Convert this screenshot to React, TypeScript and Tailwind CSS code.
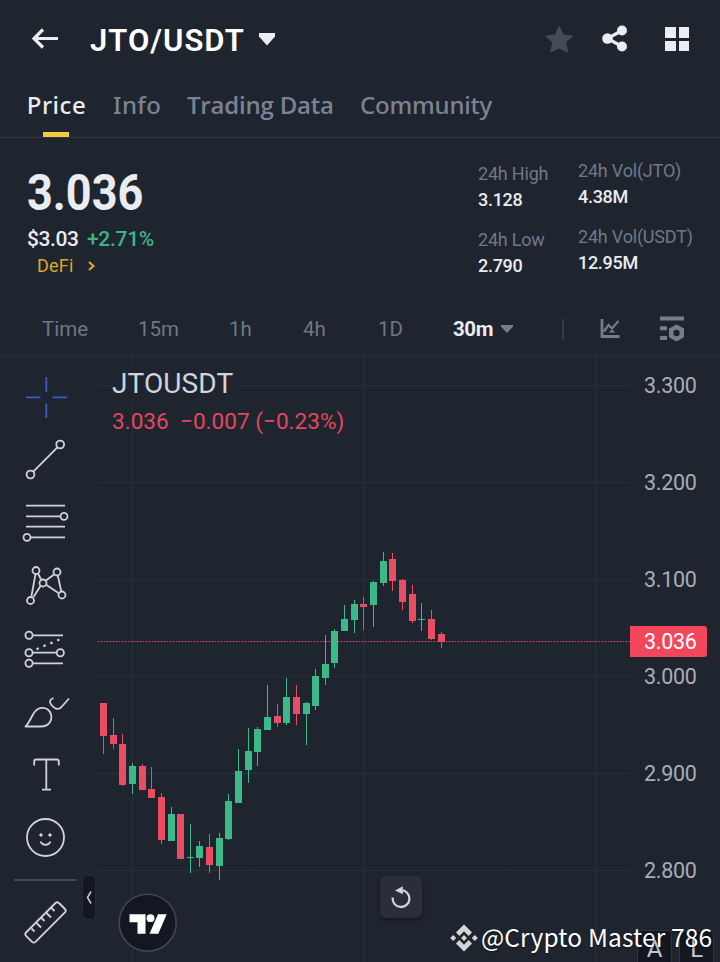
import React from "react";

type Candle = [x: number, open: number, close: number, high: number, low: number, up: 0 | 1];

// x centre, body top, body bottom, wick top, wick bottom, direction
const candles: Candle[] = [
  [103.5, 703, 736, 703, 754, 0],
  [113.5, 735, 744, 718, 749, 0],
  [122.5, 744, 785, 734, 786, 0],
  [132.5, 766, 784, 763, 794, 1],
  [142.5, 766, 790, 764, 790, 0],
  [151.5, 789, 798, 767, 798, 0],
  [161.5, 797, 840, 793, 844, 0],
  [171.5, 814, 841, 807, 841, 1],
  [180.5, 814, 859, 814, 859, 0],
  [190.5, 857, 858, 824, 873, 1],
  [199.5, 846, 858, 841, 867, 1],
  [209.5, 847, 865, 834, 873, 0],
  [219.5, 838, 866, 833, 880, 1],
  [228.5, 801, 839, 794, 840, 1],
  [238.5, 771, 803, 749, 803, 1],
  [248.5, 751, 770, 728, 783, 1],
  [257.5, 729, 752, 727, 766, 1],
  [267.5, 717, 730, 685, 730, 1],
  [277.5, 716, 723, 704, 727, 0],
  [286.5, 697, 723, 678, 725, 1],
  [296.5, 697, 714, 685, 725, 0],
  [306.5, 703, 714, 702, 745, 1],
  [315.5, 676, 706, 669, 710, 1],
  [325.5, 664, 678, 635, 685, 1],
  [334.5, 631, 663, 629, 668, 1],
  [344.5, 619, 631, 605, 631, 1],
  [354.5, 604, 620, 600, 633, 1],
  [363.5, 604, 607, 597, 630, 0],
  [373.5, 582, 605, 581, 627, 1],
  [383.5, 561, 583, 552, 586, 1],
  [392.5, 559, 581, 553, 591, 0],
  [402.5, 580, 602, 579, 610, 0],
  [412.5, 594, 621, 585, 623, 0],
  [421.5, 619, 620, 603, 631, 1],
  [431.5, 619, 639, 610, 640, 0],
  [441.5, 634, 642, 632, 648, 0],
];

const gridY = [385.5, 482.5, 579.5, 676.5, 773.5, 870.5];
const gridX = [132.5, 363.5, 595.5];
const axisLabels = ["3.300", "3.200", "3.100", "3.000", "2.900", "2.800"];

function Header() {
  return (
    <header className="flex h-[78px] items-center pl-[31px] pr-[31px]">
      <svg className="h-[22px] w-[28px]" viewBox="31 28 28 22" fill="none" stroke="#eaecef" strokeWidth="3.2">
        <path d="M58 38.5H34M43 29.5l-9 9 9 9" />
      </svg>
      <h1 className="ml-[31px] w-[154px] whitespace-nowrap pt-[3px] font-['Roboto',sans-serif] text-[31px] font-semibold leading-[75px] tracking-[1px] text-white">
        JTO/USDT
      </h1>
      <svg className="ml-[14px] h-[14px] w-[18px]" viewBox="258 32 18 14" fill="#eaecef">
        <path d="M259 33h16v3.5l-8 9-8-9z" />
      </svg>
      <svg className="ml-auto h-[28px] w-[28px]" viewBox="545 25 28 28" fill="#434c5a" stroke="#434c5a" strokeWidth="1.5" strokeLinejoin="round">
        <path d="M559.2 27l3.8 8.3 9 .9-6.7 6 2 9.5-8.1-4.2-8.1 4.2 2-9.5-6.7-6 9-.9z" />
      </svg>
      <svg className="ml-[28px] h-[28px] w-[28px]" viewBox="601 25 28 28" fill="#eaecef" stroke="#eaecef">
        <path d="M622 30.5l-14.500 8 14.500 8" fill="none" strokeWidth="3.200" />
        <circle cx="622" cy="30.500" r="5" stroke="none" />
        <circle cx="607.500" cy="38.500" r="5.300" stroke="none" />
        <circle cx="622" cy="46.500" r="5" stroke="none" />
      </svg>
      <div className="ml-[36px] grid grid-cols-2 gap-[3px]">
        <i className="size-[10.5px] bg-[#eaecef]" />
        <i className="size-[10.5px] bg-[#eaecef]" />
        <i className="size-[10.5px] bg-[#eaecef]" />
        <i className="size-[10.5px] bg-[#eaecef]" />
      </div>
    </header>
  );
}

function Tabs() {
  return (
    <nav className="flex h-[60px] whitespace-nowrap border-b border-[#2f3641] pl-[27px] text-[24px] font-medium leading-[54px] text-[#7b8392]">
      <div className="w-[86px]">
        <div className="flex w-[58px] flex-col items-center font-['Noto_Sans',sans-serif] tracking-[0.5px] text-[#eaecef]">
          <span className="pl-px">Price</span>
          <i className="h-[5px] w-[26px] bg-[#f0cd3f]" />
        </div>
      </div>
      <span className="w-[74px] font-['Noto_Sans',sans-serif] tracking-[0.4px]">Info</span>
      <span className="w-[173px] font-['Open_Sans',sans-serif] font-semibold tracking-[-0.2px]">Trading Data</span>
      <span className="font-['Noto_Sans',sans-serif] tracking-[-0.2px]">Community</span>
    </nav>
  );
}

function Stat({ label, value }: { label: string; value: string }) {
  return (
    <div className="mb-[14px] whitespace-nowrap font-['Roboto',sans-serif] text-[18px]">
      <div className="pt-px leading-[24px] tracking-[-0.2px] text-[#707887]">{label}</div>
      <div className="mt-px font-medium leading-[26px] tracking-[-0.3px] text-[#eaecef]">{value}</div>
    </div>
  );
}

function Summary() {
  return (
    <section className="flex h-[166px] pl-[27px] font-['Roboto',sans-serif]">
      <div className="w-[451px] pt-[28px]">
        <div className="w-fit origin-left scale-x-[.9] text-[50px] font-bold leading-[54px] text-[#eaecef]">3.036</div>
        <div className="mt-[5px] flex text-[21px] font-medium leading-[28px] tracking-[-0.4px]">
          <span className="w-[60px] text-[#eaecef]">$3.03</span>
          <span className="tracking-[-0.3px] text-[#3bb583]">+2.71%</span>
        </div>
        <div className="mt-px flex items-center pl-[10px] text-[18px] leading-[24px] text-[#d9a927]">
          <span className="w-[51px] tracking-[0.2px]">DeFi</span>
          <svg className="h-[10px] w-[7px]" viewBox="0 0 7 10" fill="none" stroke="#e0ac22" strokeWidth="2">
            <path d="M1 1l4.500 4L1 9" />
          </svg>
        </div>
      </div>
      <div className="w-[100px] pt-[23px]">
        <Stat label="24h High" value="3.128" />
        <Stat label="24h Low" value="2.790" />
      </div>
      <div className="pt-[20px]">
        <Stat label="24h Vol(JTO)" value="4.38M" />
        <Stat label="24h Vol(USDT)" value="12.95M" />
      </div>
    </section>
  );
}

function Intervals() {
  return (
    <section className="flex h-[50px] items-center whitespace-nowrap pl-[42px] font-['Roboto',sans-serif] text-[20.5px] leading-[50px] text-[#6f7786]">
      <span className="w-[96px]">Time</span>
      <span className="w-[91px]">15m</span>
      <span className="w-[74px]">1h</span>
      <span className="w-[75px]">4h</span>
      <span className="w-[75px]">1D</span>
      <span className="w-[48px] font-bold tracking-[-0.4px] text-[#eaecef]">30m</span>
      <svg className="h-[8px] w-[12px]" viewBox="0 0 12 8" fill="#767e8e">
        <path d="M0 0h12v1.500L6 8 0 1.500z" />
      </svg>
      <i className="ml-[49px] h-[21px] w-[2px] bg-[#343b47]" />
      <svg className="ml-[36px] h-[20px] w-[20px]" viewBox="600 318 20 20" fill="none" stroke="#767e8e" strokeWidth="2.800">
        <path d="M602 318v17.500h17.500" />
        <path d="M604 330.500l4.500-6.500 3.500 3.500 6.500-7.500" strokeWidth="2.200" />
        <path d="M608.500 331.500l3.500-3 3.500 3z" fill="#767e8e" stroke="none" />
      </svg>
      <svg className="ml-[40px] h-[26px] w-[25px]" viewBox="660 315 25 26" fill="#767e8e">
        <path d="M660 315.500h24v4h-24zM660 325.200h7v4h-7zM660 335h7v4h-7z" />
        <path fillRule="evenodd" d="M676.500 323.500l7.500 4.100v8.600l-7.500 4.300-7.500-4.300v-8.600zM676.500 328.800a3.200 3.200 0 100 6.400 3.200 3.200 0 000-6.400z" />
      </svg>
    </section>
  );
}

const toolIcons: React.ReactNode[] = [
  <path key="cross" stroke="#3a5ccc" d="M46.300 377v15M46.300 403.500v14.500M26 397.300h14.500M52.500 397.300H67" />,
  <g key="trend">
    <circle cx="60.200" cy="444.500" r="3.900" />
    <circle cx="30.500" cy="474.500" r="3.900" />
    <path d="M57.400 447.300L33.300 471.700" />
  </g>,
  <g key="fib">
    <path d="M26 505.700h39M26 516.300h34M26 526.700h39M31 537.300h34" />
    <circle cx="64" cy="516.300" r="3.500" />
    <circle cx="27" cy="537.300" r="3.500" />
  </g>,
  <g key="pattern">
    <path d="M31.500 596L35.500 574M38 573.500l3 6M46 580.500l8-6M57.800 575.500l3.500 16M46.500 585l12 8M40.500 586L33.500 597" />
    <circle cx="36" cy="570.500" r="3.500" />
    <circle cx="57" cy="572" r="3.500" />
    <circle cx="43" cy="583" r="3.500" />
    <circle cx="62" cy="595" r="3.500" />
    <circle cx="30.500" cy="600.500" r="3.500" />
  </g>,
  <g key="forecast">
    <path d="M32.500 635.300H63M32.500 652.700H56.500M32.500 663.300H63" />
    <path d="M36.500 649.300L60.500 639" strokeDasharray="2.500 5" strokeWidth="2.200" />
    <circle cx="29" cy="635.300" r="3.600" />
    <circle cx="29" cy="652.700" r="3.600" />
    <circle cx="60.300" cy="652.700" r="3.600" />
    <circle cx="29" cy="663.300" r="3.600" />
  </g>,
  <g key="brush">
    <path d="M25.500 726.500c4.500-4.500 6-11 9.500-15 4.500-5.500 12-4.500 15 .5 3.500 6.500 0 14.500-9.500 14.500z" />
    <path d="M53.500 698c-4 1.500-4.500 4-2 7 3 3.500 6 5.500 9.500 2.500l8-9" />
  </g>,
  <path key="text" d="M34.200 765.500v-4c0-1.500.5-2 2-2h20.600c1.500 0 2 .5 2 2v4M46.300 759.500v30M42 789.700h9" />,
  <g key="smile">
    <circle cx="45.500" cy="837.500" r="18.500" />
    <path d="M40.500 841.500c2 4.500 8 4.500 10 0" />
    <circle cx="41" cy="835" r="1.300" fill="#cfd3dc" strokeWidth="0.800" />
    <circle cx="50" cy="835" r="1.300" fill="#cfd3dc" strokeWidth="0.800" />
  </g>,
];

const toolBoxes = ["15 366 62 63", "15 429 62 63", "15 492 62 63", "15 555 62 63", "15 618 62 63", "15 681 62 63", "15 744 62 63", "15 807 62 63"];

function Toolbar() {
  return (
    <aside className="flex w-[97px] shrink-0 flex-col pt-[12px]">
      {toolIcons.map((icon, i) => (
        <svg key={i} className="ml-[15px] h-[63px] w-[62px] shrink-0" viewBox={toolBoxes[i]} fill="none" stroke="#cfd3dc" strokeWidth="1.800" strokeLinejoin="round">
          {icon}
        </svg>
      ))}
      <div className="flex h-[92px]">
        <div className="w-[77px] pl-[14px] pt-[9px]">
          <div className="h-[2px] w-[63px] bg-[#434751]" />
          <svg className="ml-[10px] mt-[20px] h-[44px] w-[44px]" viewBox="24 901 44 44" fill="none" stroke="#cfd3dc" strokeWidth="1.800" strokeLinejoin="round">
            <path d="M26 932.500L55.500 903q1.700-1.500 3.400 0l6 6q1.700 1.700 0 3.400L35.500 941.800q-1.700 1.700-3.400 0l-6-6q-1.700-1.700-.1-3.300z" />
            <path d="M31.500 928.500l3 3M36.500 923l4.500 4.500M41.500 918l3 3M46.500 913l4.500 4.500M51.500 908l3 3" />
          </svg>
        </div>
        <div className="ml-[5px] mt-[5px] flex h-[45px] w-[14px] items-center justify-center rounded-[6px] border border-[#262b36] bg-[#131722]">
          <svg className="h-[13px] w-[6px]" viewBox="0 0 6 13" fill="none" stroke="#c3c7d0" strokeWidth="1.600">
            <path d="M5 .5L1.500 6.500 5 12.500" />
          </svg>
        </div>
      </div>
    </aside>
  );
}

function Chart() {
  return (
    <div className="relative h-full w-[533px] shrink-0">
      <svg className="block h-[608px] w-[533px]" viewBox="97 354 533 608">
        <g stroke="#29303a" strokeWidth="1">
          {gridY.map((y) => (
            <path key={y} d={`M97 ${y}H630`} />
          ))}
          {gridX.map((x) => (
            <path key={x} d={`M${x} 354V962`} />
          ))}
        </g>
        <path d="M98 641.500H630" stroke="#f0405c" strokeOpacity="0.25" strokeWidth="1" />
        <path d="M98 641.500H630" stroke="#e84c66" strokeWidth="1" strokeDasharray="1 2" shapeRendering="crispEdges" />
        {candles.map(([x, top, bottom, high, low, up]) => (
          <g key={x} fill={up ? "#3bb988" : "#ea4c64"}>
            <rect x={x - 0.5} y={high} width="1" height={low - high} />
            <rect x={x - 3.5} y={top} width="7" height={bottom - top} />
          </g>
        ))}
      </svg>
      <div className="absolute left-[15px] top-[13px] whitespace-nowrap font-['Roboto',sans-serif]">
        <div className="w-fit bg-[#1f252f] pr-[6px] text-[28px] leading-[34px] tracking-[0.1px] text-[#d1d4dc]">JTOUSDT</div>
        <div className="mt-[6px] flex text-[22.6px] leading-[30px] text-[#e0485f]">
          <span className="w-[68px]">3.036</span>
          <span>−0.007 (−0.23%)</span>
        </div>
      </div>
      <svg className="absolute left-[21px] top-[539px] h-[60px] w-[60px]" viewBox="118 893 60 60">
        <circle cx="147.700" cy="922.700" r="28.500" fill="#131722" stroke="#43464f" strokeWidth="1.600" />
        <path fill="#fff" d="M129.500 914.300h16v19.500h-8V922.300h-8zM158 914.300h8.700l-8.400 19.500h-8.800z" />
        <circle cx="150.500" cy="918.200" r="3.900" fill="#fff" />
      </svg>
      <div className="absolute left-[283px] top-[522px] flex size-[42px] items-center justify-center rounded-[6px] bg-[#2a2e39] shadow-[0_2px_4px_rgba(0,0,0,0.4)]">
        <svg className="h-[24px] w-[22px]" viewBox="390 885 22 24" fill="none" stroke="#cfd3dc" strokeWidth="2.300">
          <path d="M392.700 897.500a8.400 8.400 0 108.300-7.300h-1" />
          <path d="M402.800 886.300v8l-7.800-3.800z" fill="#cfd3dc" stroke="none" />
        </svg>
      </div>
    </div>
  );
}

function PriceAxis() {
  return (
    <div className="relative flex w-[90px] flex-col gap-[34px] pl-[14px] font-['Roboto',sans-serif] text-[21.5px] tracking-[-0.3px] text-[#a9adb7]">
      {axisLabels.map((label) => (
        <div key={label} className="h-[63px] shrink-0 leading-[64px]">
          {label}
        </div>
      ))}
      <div className="absolute left-0 top-[272px] h-[31px] w-[77px] rounded-r-[3px] bg-[#f2465c] pl-[14px] leading-[31px] text-white">
        3.036
      </div>
      <div className="absolute left-[7px] top-[576px] flex gap-[7px] text-[24px] leading-[36px] text-[#c3c7d0]">
        <span className="h-[32px] w-[35px] overflow-hidden rounded-t-[5px] border border-b-0 border-[#31353f] bg-[#131722] text-center">A</span>
        <span className="h-[32px] w-[35px] overflow-hidden rounded-t-[5px] border border-b-0 border-[#31353f] bg-[#131722] text-center">L</span>
      </div>
    </div>
  );
}

function Watermark() {
  return (
    <div className="absolute left-[450px] top-[919px] flex h-[36px] items-center whitespace-nowrap">
      <svg className="mt-[2px] h-[28px] w-[28px]" viewBox="0 0 28 28" fill="#d6d6d6">
        <path d="M14 .500l8 8-3.400 3.400-4.600-4.600-4.600 4.600L6 8.500zM14 27.500l8-8-3.400-3.400-4.600 4.600-4.600-4.600L6 19.500zM14 11l3 3-3 3-3-3zM3.200 11l3 3-3 3-3-3zM24.800 11l3 3-3 3-3-3z" />
      </svg>
      <span className="ml-[3px] font-['Noto_Sans_CJK_SC',sans-serif] text-[24.5px] leading-[36px] tracking-[0.15px] text-white [text-shadow:0_1px_2px_rgba(0,0,0,0.5)]">
        @Crypto Master 786
      </span>
    </div>
  );
}

export default function App() {
  return (
    <div className="relative h-[962px] w-[720px] overflow-hidden bg-[#1f252f]">
      <Header />
      <Tabs />
      <Summary />
      <Intervals />
      <main className="flex h-[608px] bg-linear-to-b from-[#242a34] from-[4px] to-[#1f252f] to-[4px]">
        <Toolbar />
        <Chart />
        <PriceAxis />
      </main>
      <Watermark />
    </div>
  );
}
